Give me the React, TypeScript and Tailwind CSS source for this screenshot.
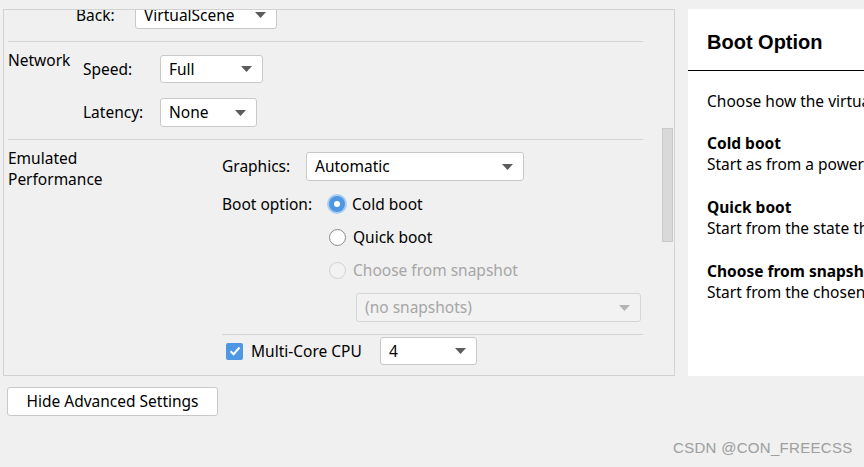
import type { ReactNode } from 'react'

const FONT = { fontFamily: '"Noto Sans", "Open Sans", sans-serif' }

function Arrow({ disabled }: { disabled?: boolean }) {
  return (
    <svg width="11" height="6" viewBox="0 0 11 6" className="shrink-0">
      <path d="M0 0 L11 0 L5.5 6 Z" fill={disabled ? '#b4b4b4' : '#5c5c5c'} />
    </svg>
  )
}

function Dropdown({
  value,
  width,
  height = 28,
  disabled,
}: {
  value: string
  width: string
  height?: number
  disabled?: boolean
}) {
  return (
    <div
      className={`${width} flex items-center justify-between pl-[8px] pr-[10px] rounded-[3px] border ${
        disabled ? 'bg-[#f2f2f2] border-[#d6d6d6] text-[#a6a6a6]' : 'bg-white border-[#c9c9c9] text-black'
      }`}
      style={{ height }}
    >
      <span>{value}</span>
      <Arrow disabled={disabled} />
    </div>
  )
}

function Radio({ checked, disabled, children }: { checked?: boolean; disabled?: boolean; children: ReactNode }) {
  return (
    <div className={`h-[22px] flex items-center ${disabled ? 'text-[#a6a6a6]' : 'text-black'}`}>
      {checked ? (
        <div className="w-[20px] h-[20px] rounded-full bg-[#a9cdf3] flex items-center justify-center -ml-[2px] mr-[5px]">
          <div className="w-[16px] h-[16px] rounded-full bg-[#4d97e3] flex items-center justify-center">
            <div className="w-[6px] h-[6px] rounded-full bg-white" />
          </div>
        </div>
      ) : (
        <div
          className={`w-[17px] h-[17px] rounded-full border mr-[7px] ${
            disabled ? 'border-[#d2d2d2] bg-[#f2f2f2]' : 'border-[#8c8c8c] bg-white'
          }`}
        />
      )}
      <span>{children}</span>
    </div>
  )
}

export default function App() {
  return (
    <div className="relative w-[864px] h-[467px] bg-[#f0f0f0] overflow-hidden text-[15.5px] leading-[21px]" style={FONT}>
      <div className="flex pt-[9px] pl-[3px]">
        {/* Settings panel (scrolled) */}
        <div className="w-[672px] h-[367px] shrink-0 border border-[#d2d2d2] overflow-hidden flex">
          <div className="w-[639px] pl-[4px] shrink-0 flex flex-col -mt-[9px]">
            {/* Back camera */}
            <div className="h-[28px] flex items-center pl-[68px]">
              <span className="w-[59px]">Back:</span>
              <Dropdown value="VirtualScene" width="w-[142px]" />
            </div>
            <div className="h-px bg-[#d4d4d4] mt-[12px]" />

            {/* Network */}
            <div className="flex">
              <div className="w-[75px] pt-[8px]">Network</div>
              <div className="flex flex-col pt-[13px] gap-[15px]">
                <div className="flex items-center">
                  <span className="w-[77px]">Speed:</span>
                  <Dropdown value="Full" width="w-[103px]" />
                </div>
                <div className="flex items-center">
                  <span className="w-[77px]">Latency:</span>
                  <Dropdown value="None" width="w-[97px]" height={29} />
                </div>
              </div>
            </div>
            <div className="h-px bg-[#d4d4d4] mt-[12px]" />

            {/* Emulated performance */}
            <div className="flex">
              <div className="w-[214px] pt-[8px]">
                Emulated
                <br />
                Performance
              </div>
              <div className="flex-1 flex flex-col pt-[12px]">
                <div className="flex items-center">
                  <span className="w-[84px]">Graphics:</span>
                  <Dropdown value="Automatic" width="w-[218px]" height={29} />
                </div>
                <div className="flex mt-[12px]">
                  <span className="w-[107px] h-[22px] flex items-center">Boot option:</span>
                  <div className="flex flex-col gap-[11px]">
                    <Radio checked>Cold boot</Radio>
                    <Radio>Quick boot</Radio>
                    <Radio disabled>Choose from snapshot</Radio>
                  </div>
                </div>
                <div className="mt-[12px] pl-[134px]">
                  <Dropdown value="(no snapshots)" width="w-[285px]" height={29} disabled />
                </div>
                <div className="h-px bg-[#d4d4d4] mt-[12px]" />
                <div className="flex items-center mt-[2px] pl-[4px]">
                  <div className="w-[17px] h-[17px] rounded-[2px] bg-[#4d97e3] flex items-center justify-center">
                    <svg width="12" height="10" viewBox="0 0 12 10">
                      <path d="M1.5 5.2 L4.6 8.2 L10.5 1.5" fill="none" stroke="white" strokeWidth="2" />
                    </svg>
                  </div>
                  <span className="ml-[8px] w-[129px]">Multi-Core CPU</span>
                  <Dropdown value="4" width="w-[97px]" />
                </div>
              </div>
            </div>
          </div>
          {/* Scrollbar */}
          <div className="flex-1 flex justify-end pr-[1px]">
            <div className="w-[11px] h-[114px] mt-[118px] bg-[#d9d9d9] border border-[#c9c9c9]" />
          </div>
        </div>

        {/* Help panel */}
        <div className="w-[220px] h-[367px] shrink-0 ml-[13px] bg-white">
          <div className="h-[62px] pt-[21px] pl-[19px] border-b border-black">
            <div className="text-[20px] leading-[24px] font-bold text-black" style={{ fontFamily: '"Liberation Sans", Arial, sans-serif' }}>
              Boot Option
            </div>
          </div>
          <div className="pl-[19px] pt-[20px] text-black whitespace-nowrap">
            <div>Choose how the virtual device should boot.</div>
            <div className="mt-[21px] font-bold">Cold boot</div>
            <div>Start as from a power-up.</div>
            <div className="mt-[22px] font-bold">Quick boot</div>
            <div>Start from the state that was saved.</div>
            <div className="mt-[22px] font-bold">Choose from snapshot</div>
            <div>Start from the chosen snapshot.</div>
          </div>
        </div>
      </div>

      <div className="pl-[7px] pt-[11px]">
        <button className="w-[211px] h-[29px] bg-white border border-[#c9c9c9] rounded-[3px] text-black">
          Hide Advanced Settings
        </button>
      </div>

      {/* Watermark */}
      <div
        className="absolute left-[673px] top-[438px] text-[15px] leading-[20px] text-[#a0a0a0] tracking-[0.3px]"
        style={{ fontFamily: '"Liberation Sans", Arial, sans-serif', textShadow: '0 0 1px #e8e8e8' }}
      >
        CSDN @CON_FREECSS
      </div>
    </div>
  )
}
